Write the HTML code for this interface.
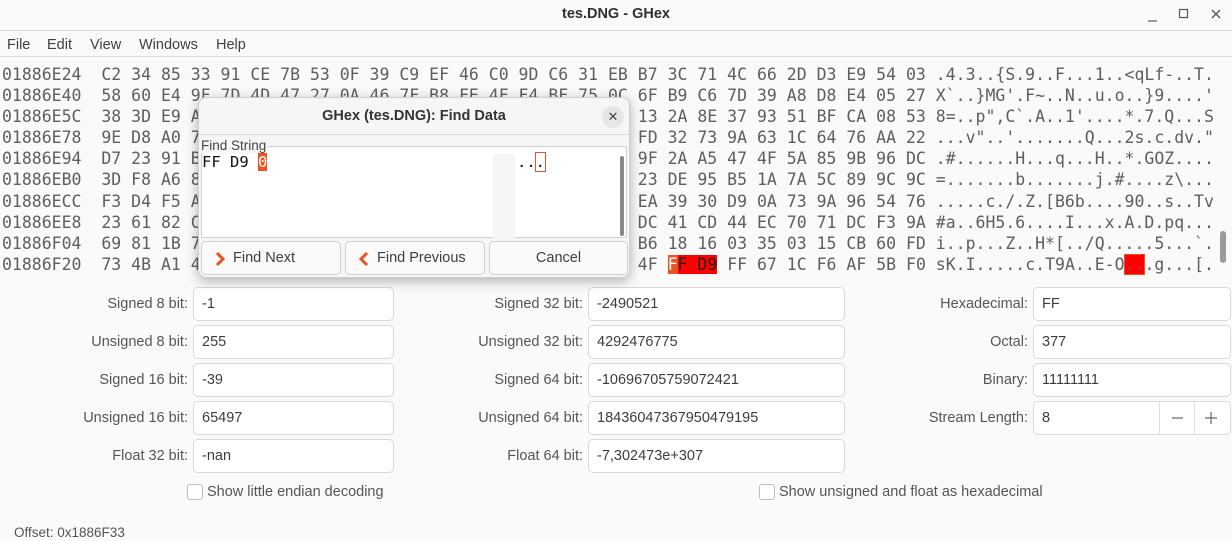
<!DOCTYPE html>
<html><head><meta charset="utf-8"><style>
*{box-sizing:border-box;margin:0;padding:0}
body{width:1232px;height:541px;background:#fafafa;font-family:"Liberation Sans","DejaVu Sans",sans-serif;color:#3d3d3d;position:relative;overflow:hidden;font-size:14.5px}
.abs{position:absolute}
#title{left:0;top:0;width:1232px;height:31px;border-bottom:1px solid #d6d6d6;text-align:center;font-weight:bold;font-size:14.5px;line-height:28px;color:#303030}
#menu{left:0;top:32px;width:1232px;height:25px;border-bottom:1px solid #dcdcdc}
#menu span{position:absolute;top:5px;color:#404040}
#hex{left:2px;top:64px;font-family:"DejaVu Sans Mono","Liberation Mono",monospace;font-size:16.5px;line-height:21.1px;white-space:pre;color:#5e5e5e}
.lbl{position:absolute;text-align:right;color:#555;width:200px}
.ent{position:absolute;height:34px;border:1px solid #d8d8d8;border-radius:5px;background:#fff;padding-left:8px;line-height:33px;color:#3d3d3d}
.cb{position:absolute;width:16px;height:16px;border:1px solid #bdbdbd;border-radius:3px;background:#fff}
#dlg{left:198px;top:97px;width:432px;height:181px;background:#f6f6f6;border:1px solid #cfcfcf;border-radius:8px;box-shadow:0 3px 12px rgba(0,0,0,.3)}
.btn{position:absolute;top:143px;height:34px;border:1px solid #cfcfcf;border-radius:5px;background:#fafafa;line-height:33px;color:#3d3d3d}
</style></head><body>
<div id="title" class="abs">tes.DNG - GHex</div>
<svg class="abs" style="left:1140px;top:6px" width="90" height="20"><line x1="8" y1="15" x2="17" y2="15" stroke="#555" stroke-width="1.2"/><rect x="39.5" y="3.5" width="8" height="8" fill="none" stroke="#555" stroke-width="1.2"/><path d="M72 4L80 12M80 4L72 12" stroke="#555" stroke-width="1.3"/></svg>
<div id="menu" class="abs"><span style="left:7px">File</span><span style="left:47px">Edit</span><span style="left:90px">View</span><span style="left:139px">Windows</span><span style="left:216px">Help</span></div>
<div id="hex" class="abs">01886E24  C2 34 85 33 91 CE 7B 53 0F 39 C9 EF 46 C0 9D C6 31 EB B7 3C 71 4C 66 2D D3 E9 54 03 .4.3..{S.9..F...1..&lt;qLf-..T.
01886E40  58 60 E4 9F 7D 4D 47 27 0A 46 7F B8 FE 4F F4 BF 75 0C 6F B9 C6 7D 39 A8 D8 E4 05 27 X`..}MG'.F~..N..u.o..}9....'
01886E5C  38 3D E9 A1 00 00 00 00 00 00 00 00 00 00 00 00 00 00 13 2A 8E 37 93 51 BF CA 08 53 8=..p",C`.A..1'....*.7.Q...S
01886E78  9E D8 A0 7A 00 00 00 00 00 00 00 00 00 00 00 00 00 00 FD 32 73 9A 63 1C 64 76 AA 22 ...v"..'.......Q...2s.c.dv."
01886E94  D7 23 91 B0 00 00 00 00 00 00 00 00 00 00 00 00 00 00 9F 2A A5 47 4F 5A 85 9B 96 DC .#......H...q...H..*.GOZ....
01886EB0  3D F8 A6 80 00 00 00 00 00 00 00 00 00 00 00 00 00 00 23 DE 95 B5 1A 7A 5C 89 9C 9C =.......b.......j.#....z\...
01886ECC  F3 D4 F5 A0 00 00 00 00 00 00 00 00 00 00 00 00 00 00 EA 39 30 D9 0A 73 9A 96 54 76 .....c./.Z.[B6b....90..s..Tv
01886EE8  23 61 82 C0 00 00 00 00 00 00 00 00 00 00 00 00 00 00 DC 41 CD 44 EC 70 71 DC F3 9A #a..6H5.6....I...x.A.D.pq...
01886F04  69 81 1B 70 00 00 00 00 00 00 00 00 00 00 00 00 00 00 B6 18 16 03 35 03 15 CB 60 FD i..p...Z..H*[../Q.....5...`.
01886F20  73 4B A1 40 00 00 00 00 00 00 00 00 00 00 00 00 00 00 4F <span style="background:#e95420;color:#fff">F</span><span style="background:#f00;color:#222">F D9</span> FF 67 1C F6 AF 5B F0 sK.I.....c.T9A..E-O<span style="background:#f00;outline:1px solid #e95420">..</span>.g...[.</div>
<div class="abs" style="left:1220px;top:231px;width:6px;height:32px;background:#9a9a9a;border-radius:3px"></div>

<div class="lbl" style="left:-12px;top:296px">Signed 8 bit:</div><div class="ent" style="left:193px;top:287px;width:201px">-1</div>
<div class="lbl" style="left:-12px;top:334px">Unsigned 8 bit:</div><div class="ent" style="left:193px;top:325px;width:201px">255</div>
<div class="lbl" style="left:-12px;top:372px">Signed 16 bit:</div><div class="ent" style="left:193px;top:363px;width:201px">-39</div>
<div class="lbl" style="left:-12px;top:410px">Unsigned 16 bit:</div><div class="ent" style="left:193px;top:401px;width:201px">65497</div>
<div class="lbl" style="left:-12px;top:448px">Float 32 bit:</div><div class="ent" style="left:193px;top:439px;width:201px">-nan</div>
<div class="cb" style="left:187px;top:484px"></div><div class="abs" style="left:207px;top:484px;color:#555">Show little endian decoding</div>

<div class="lbl" style="left:383px;top:296px">Signed 32 bit:</div><div class="ent" style="left:588px;top:287px;width:257px">-2490521</div>
<div class="lbl" style="left:383px;top:334px">Unsigned 32 bit:</div><div class="ent" style="left:588px;top:325px;width:257px">4292476775</div>
<div class="lbl" style="left:383px;top:372px">Signed 64 bit:</div><div class="ent" style="left:588px;top:363px;width:257px">-10696705759072421</div>
<div class="lbl" style="left:383px;top:410px">Unsigned 64 bit:</div><div class="ent" style="left:588px;top:401px;width:257px">18436047367950479195</div>
<div class="lbl" style="left:383px;top:448px">Float 64 bit:</div><div class="ent" style="left:588px;top:439px;width:257px">-7,302473e+307</div>
<div class="cb" style="left:759px;top:484px"></div><div class="abs" style="left:779px;top:484px;color:#555">Show unsigned and float as hexadecimal</div>

<div class="lbl" style="left:828px;top:296px">Hexadecimal:</div><div class="ent" style="left:1033px;top:287px;width:198px">FF</div>
<div class="lbl" style="left:828px;top:334px">Octal:</div><div class="ent" style="left:1033px;top:325px;width:198px">377</div>
<div class="lbl" style="left:828px;top:372px">Binary:</div><div class="ent" style="left:1033px;top:363px;width:198px">11111111</div>
<div class="lbl" style="left:828px;top:410px">Stream Length:</div><div class="ent" style="left:1033px;top:401px;width:198px">8
<div class="abs" style="left:125px;top:0;width:1px;height:32px;background:#e0e0e0"></div><div class="abs" style="left:160px;top:0;width:1px;height:32px;background:#e0e0e0"></div>
<svg class="abs" style="left:125px;top:0" width="72" height="32"><line x1="13" y1="16" x2="24" y2="16" stroke="#666" stroke-width="1.2"/><path d="M46 16H58M52 10V22" stroke="#666" stroke-width="1.2"/></svg></div>

<div class="abs" style="left:14px;top:525px;color:#555;font-size:13.5px">Offset: 0x1886F33</div>

<div id="dlg" class="abs">
 <div class="abs" style="left:0;top:0;width:430px;height:37px;border-bottom:1px solid #d8d8d8;text-align:center;line-height:37px;font-weight:bold;color:#333">GHex (tes.DNG): Find Data</div>
 <div class="abs" style="left:403px;top:8px;width:22px;height:22px;border-radius:11px;background:#e6e6e6;text-align:center;line-height:21px;font-size:13px;color:#444">✕</div>
 <div class="abs" style="left:2px;top:48px;width:426px;height:92px;border:1px solid #cfcfcf;background:#fff"></div>
 <div class="abs" style="left:2px;top:40px;background:#f6f6f6;padding-right:2px;color:#444;font-size:13.5px">Find String</div>
 <div class="abs" style="left:294px;top:56px;width:22px;height:84px;background:#f6f6f6"></div>
 <div class="abs" style="left:3px;top:55px;font-family:'DejaVu Sans Mono',monospace;font-size:15.5px;white-space:pre;color:#111">FF D9 <span style="background:#e95420;color:#fff">0</span></div>
 <div class="abs" style="left:318px;top:55px;font-family:'DejaVu Sans Mono',monospace;font-size:15.5px;white-space:pre;color:#111">..<span style="outline:1px solid #e95420">.</span></div>
 <div class="abs" style="left:421px;top:58px;width:4px;height:80px;background:#888;border-radius:2px"></div>
 <div class="btn" style="left:2px;width:140px"><svg class="abs" style="left:12px;top:9px" width="12" height="16"><path d="M3 2L9 8L3 14" fill="none" stroke="#e95420" stroke-width="3"/></svg><span style="position:absolute;left:31px">Find Next</span></div>
 <div class="btn" style="left:146px;width:140px"><svg class="abs" style="left:12px;top:9px" width="12" height="16"><path d="M9 2L3 8L9 14" fill="none" stroke="#e95420" stroke-width="3"/></svg><span style="position:absolute;left:31px">Find Previous</span></div>
 <div class="btn" style="left:290px;width:139px;text-align:center">Cancel</div>
</div>
</body></html>
